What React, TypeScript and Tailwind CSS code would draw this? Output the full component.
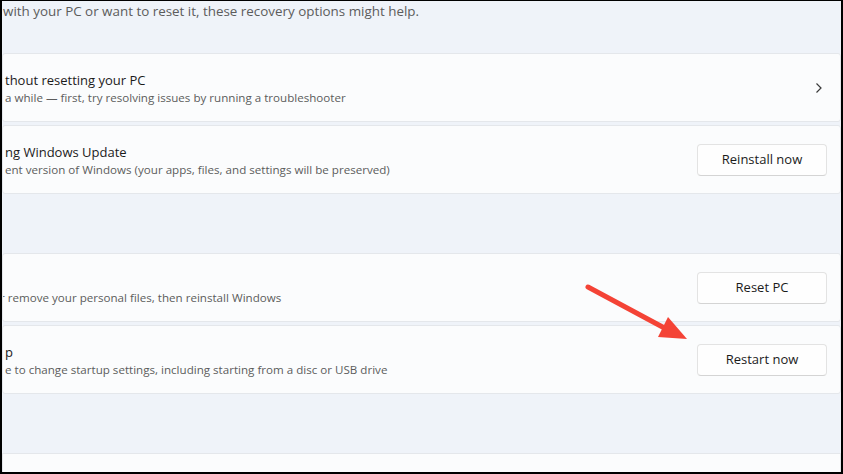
const font = { fontFamily: '"Segoe UI", "Open Sans", "Noto Sans", sans-serif' };

const Card = ({
  title,
  desc,
  right,
  titleClass = "",
  descClass = "",
}: {
  title?: string;
  desc: string;
  right?: React.ReactNode;
  titleClass?: string;
  descClass?: string;
}) => (
  <div className="h-[69px] shrink-0 flex items-center justify-between bg-[#fbfcfd] border border-[#e4e7eb] rounded-[3px] overflow-hidden">
    <div className="flex flex-col pl-[2px] min-w-0">
      <span className={`h-[20px] text-[13px] leading-[20px] text-[#1b1b1b] whitespace-nowrap ${titleClass}`}>
        {title ?? "\u00a0"}
      </span>
      <span className={`h-[16px] text-[11.6px] leading-[16px] text-[#5c5c5c] whitespace-nowrap ${descClass}`}>
        {desc}
      </span>
    </div>
    {right}
  </div>
);

const ActionButton = ({ label }: { label: string }) => (
  <button className="mr-[13px] w-[130px] h-[32px] shrink-0 rounded-[4px] bg-[#fefefe] border border-[#e3e3e3] border-b-[#d4d4d4] text-[13px] text-[#1b1b1b]">
    {label}
  </button>
);

const Chevron = () => (
  <svg className="mr-[17px] shrink-0" width="8" height="12" viewBox="0 0 8 12">
    <path d="M1.5 1.5 L6 6 L1.5 10.5" fill="none" stroke="#3a3a3a" strokeWidth="1.2" />
  </svg>
);

export default function App() {
  return (
    <div className="w-[843px] h-[474px] bg-black pl-[2px] pt-[1px] pr-[2px] pb-[2px]" style={font}>
      <div className="relative w-full h-full bg-[#eff3f9] overflow-hidden flex flex-col">
        <div className="h-[52px] shrink-0 pl-[1px]">
          <div className="text-[13.4px] leading-[20px] text-[#5c5c5c] whitespace-nowrap">
            with your PC or want to reset it, these recovery options might help.
          </div>
        </div>
        <div className="flex flex-col gap-[3px]">
          <Card
            title="thout resetting your PC"
            desc="a while — first, try resolving issues by running a troubleshooter"
            right={<Chevron />}
          />
          <Card
            title="ng Windows Update"
            desc="ent version of Windows (your apps, files, and settings will be preserved)"
            right={<ActionButton label="Reinstall now" />}
          />
        </div>
        <div className="h-[59px] shrink-0" />
        <div className="flex flex-col gap-[3px]">
          <Card
            desc="r remove your personal files, then reinstall Windows"
            descClass="-ml-[5px]"
            right={<ActionButton label="Reset PC" />}
          />
          <Card
            title="p"
            desc="e to change startup settings, including starting from a disc or USB drive"
            right={<ActionButton label="Restart now" />}
          />
        </div>
        <div className="h-[59px] shrink-0" />
        <div className="h-[69px] shrink-0 bg-[#fbfcfd] border border-[#e4e7eb]" />

        <svg className="absolute left-0 top-0 pointer-events-none" width="839" height="471" viewBox="0 0 839 471">
          <line x1="586" y1="286" x2="668" y2="330" stroke="#f44336" strokeWidth="5" strokeLinecap="round" />
          <polygon points="666,316 656,336 685,338" fill="#f44336" />
        </svg>
      </div>
    </div>
  );
}
